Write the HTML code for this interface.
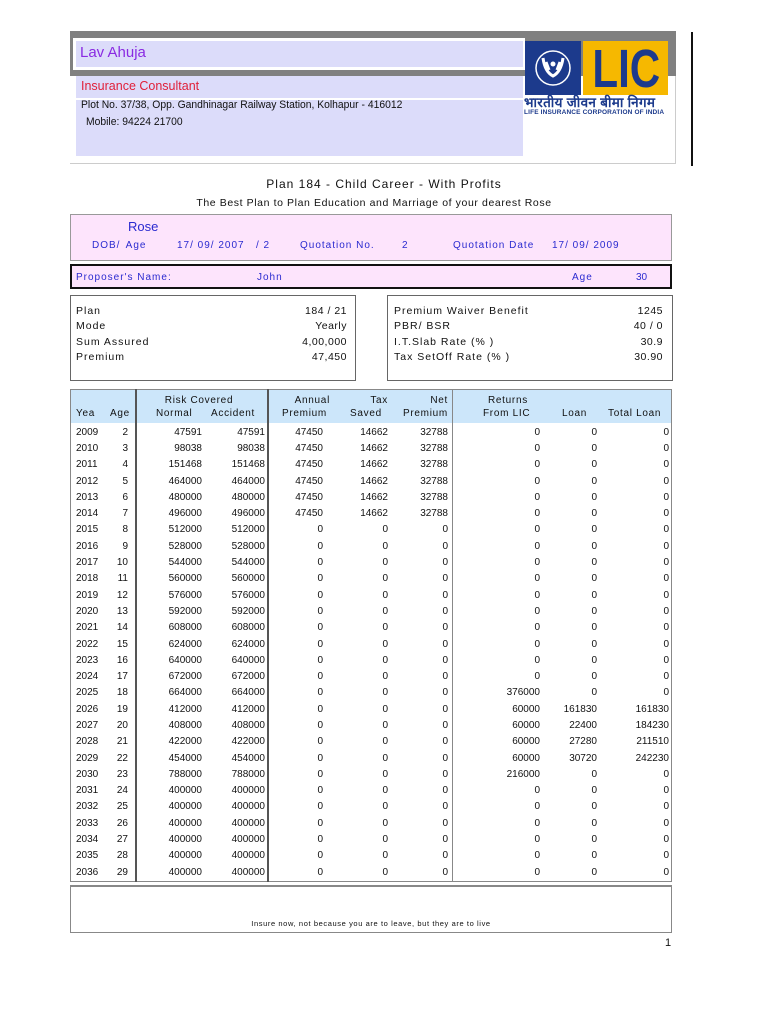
<!DOCTYPE html>
<html><head><meta charset="utf-8"><style>
*{margin:0;padding:0;box-sizing:border-box}
body{width:768px;height:1024px;background:#fff;position:relative;font-family:"Liberation Sans",sans-serif;color:#111;overflow:hidden}
.a{position:absolute}
.sp{letter-spacing:1px}
table{border-collapse:collapse;table-layout:fixed;font-size:10px}
td{height:16.3px;padding:0 3px;white-space:nowrap}
td:first-child{padding-left:6px}
td:nth-child(2){padding-right:9px}
.r{text-align:right}
</style></head><body>
<div class="a" style="left:70px;top:31px;width:606px;height:45px;background:#808080"></div>
<div class="a" style="left:73px;top:38px;width:452px;height:32px;background:#fff"></div>
<div class="a" style="left:76px;top:41px;width:447px;height:26px;background:#dcdcfa"></div>
<div class="a" style="left:80px;top:44px;font-size:15px;color:#8a2be2">Lav Ahuja</div>
<div class="a" style="left:70px;top:76px;width:606px;height:88px;background:#fff;border-right:1px solid #ccc;border-bottom:1px solid #ccc"></div>
<div class="a" style="left:76px;top:76px;width:447px;height:22px;background:#dcdcfa"></div>
<div class="a" style="left:81px;top:79px;font-size:12.5px;color:#e0203a">Insurance Consultant</div>
<div class="a" style="left:76px;top:100px;width:447px;height:56px;background:#dcdcfa"></div>
<div class="a" style="left:81px;top:99px;font-size:11px;transform:scaleX(.94);transform-origin:left">Plot No. 37/38, Opp. Gandhinagar Railway Station, Kolhapur - 416012</div>
<div class="a" style="left:86px;top:116px;font-size:11px;transform:scaleX(.94);transform-origin:left">Mobile: 94224 21700</div>
<div class="a" style="left:525px;top:41px;width:56px;height:54px;background:#1c3a8c"></div>
<svg class="a" style="left:533px;top:48px" width="40" height="40" viewBox="0 0 40 40"><circle cx="20" cy="20" r="17" fill="none" stroke="#fff" stroke-width="1.5"/><path d="M10 10 Q12 24 20 28 Q28 24 30 10 M13 14 L16 22 M27 14 L24 22" stroke="#fff" stroke-width="3" fill="none"/><circle cx="20" cy="16" r="2.5" fill="#fff"/></svg>
<div class="a" style="left:583px;top:41px;width:85px;height:54px;background:#f6b800;overflow:hidden"><div style="color:#1c3a8c;font-size:54px;font-weight:bold;line-height:56px;text-align:center;transform:scaleX(.78);width:85px">LIC</div></div>
<div class="a" style="left:524px;top:96px;width:150px;font-size:13.5px;color:#1c3a8c;font-weight:bold;line-height:13px;letter-spacing:.3px;font-family:'Liberation Sans','DejaVu Sans',sans-serif;white-space:nowrap">भारतीय जीवन बीमा निगम</div>
<div class="a" style="left:524px;top:109px;font-size:6.5px;color:#1c3a8c;font-weight:bold;letter-spacing:.15px;white-space:nowrap">LIFE INSURANCE CORPORATION OF INDIA</div>
<div class="a" style="left:691px;top:32px;width:2px;height:134px;background:#111"></div>

<div class="a sp" style="left:0;width:768px;top:177px;text-align:center;font-size:12px">Plan 184 - Child Career - With Profits</div>
<div class="a" style="left:0;width:748px;top:197px;text-align:center;font-size:10.5px;letter-spacing:.6px">The Best Plan to Plan Education and Marriage of your dearest Rose</div>

<div class="a" style="left:70px;top:214px;width:602px;height:47px;background:#fde4fc;border:1px solid #999"></div>
<div class="a" style="left:128px;top:219px;font-size:13px;color:#2a2ad0">Rose</div>
<div class="a sp" style="left:92px;top:240px;font-size:10px;color:#2a2ad0;word-spacing:2px">DOB/ Age</div>
<div class="a sp" style="left:177px;top:240px;font-size:10px;color:#2a2ad0">17/ 09/ 2007 &nbsp;&nbsp;/ 2</div>
<div class="a sp" style="left:300px;top:240px;font-size:10px;color:#2a2ad0">Quotation No.</div>
<div class="a" style="left:402px;top:240px;font-size:10px;color:#2a2ad0">2</div>
<div class="a sp" style="left:453px;top:240px;font-size:10px;color:#2a2ad0">Quotation Date</div>
<div class="a sp" style="left:552px;top:240px;font-size:10px;color:#2a2ad0">17/ 09/ 2009</div>

<div class="a" style="left:70px;top:264px;width:602px;height:25px;background:#fde4fc;border:2px solid #111"></div>
<div class="a sp" style="left:76px;top:272px;font-size:10px;color:#2a2ad0">Proposer's Name:</div>
<div class="a sp" style="left:257px;top:272px;font-size:10px;color:#2a2ad0">John</div>
<div class="a sp" style="left:572px;top:272px;font-size:10px;color:#2a2ad0">Age</div>
<div class="a" style="left:636px;top:272px;font-size:10px;color:#2a2ad0">30</div>

<div class="a" style="left:70px;top:295px;width:286px;height:86px;border:1px solid #666"></div>
<div class="a sp" style="left:76px;top:304px;font-size:10.5px;line-height:15.3px">Plan<br>Mode<br>Sum Assured<br>Premium</div>
<div class="a" style="left:200px;width:147px;top:304px;font-size:10.5px;line-height:15.3px;text-align:right;letter-spacing:.5px">184 / 21<br>Yearly<br>4,00,000<br>47,450</div>
<div class="a" style="left:387px;top:295px;width:286px;height:86px;border:1px solid #666"></div>
<div class="a sp" style="left:394px;top:304px;font-size:10.5px;line-height:15.3px">Premium Waiver Benefit<br>PBR/ BSR<br>I.T.Slab Rate (% )<br>Tax SetOff Rate (% )</div>
<div class="a" style="left:560px;width:103px;top:304px;font-size:10.5px;line-height:15.3px;text-align:right;letter-spacing:.5px">1245<br>40 / 0<br>30.9<br>30.90</div>

<div class="a" style="left:70px;top:389px;width:602px;height:34px;background:#cce6fa"></div>
<div class="a" style="left:70px;top:389px;width:602px;height:493px;border:1px solid #888"></div>
<div class="a" style="left:135px;top:389px;width:2px;height:493px;background:#555"></div>
<div class="a" style="left:267px;top:389px;width:2px;height:493px;background:#555"></div>
<div class="a" style="left:452px;top:389px;width:1px;height:493px;background:#888"></div>
<div class="a" style="left:70px;top:394px;width:602px;font-size:10px;letter-spacing:.7px;line-height:14px">
<span class="a" style="left:93px;width:72px;text-align:center">Risk Covered</span>
<span class="a" style="left:6px;top:13px">Yea</span><span class="a" style="left:40px;top:13px">Age</span>
<span class="a" style="left:86px;top:13px">Normal</span><span class="a" style="left:141px;top:13px">Accident</span>
<span class="a" style="left:222px;width:38px;text-align:right">Annual</span><span class="a" style="left:212px;top:13px">Premium</span>
<span class="a" style="left:280px;width:38px;text-align:right">Tax</span><span class="a" style="left:280px;top:13px">Saved</span>
<span class="a" style="left:340px;width:38px;text-align:right">Net</span><span class="a" style="left:333px;top:13px">Premium</span>
<span class="a" style="left:418px">Returns</span><span class="a" style="left:413px;top:13px">From LIC</span>
<span class="a" style="left:492px;top:13px">Loan</span><span class="a" style="left:538px;top:13px">Total Loan</span>
</div>
<table class="a" style="left:70px;top:424px;width:602px">
<colgroup><col style="width:37px"><col style="width:30px"><col style="width:68px"><col style="width:63px"><col style="width:58px"><col style="width:65px"><col style="width:60px"><col style="width:92px"><col style="width:57px"><col style="width:72px"></colgroup>
<tbody id="tb"></tbody></table>
<div class="a" style="left:70px;top:885px;width:602px;height:48px;border:1px solid #888;border-top:2px solid #888"></div>
<div class="a" style="left:70px;top:919px;width:602px;text-align:center;font-size:7.5px;letter-spacing:.6px">Insure now, not because you are to leave, but they are to live</div>
<div class="a" style="left:665px;top:937px;font-size:11px">1</div>
<script>
var n=[47591,98038,151468,464000,480000,496000,512000,528000,544000,560000,576000,592000,608000,624000,640000,672000,664000,412000,408000,422000,454000,788000,400000,400000,400000,400000,400000,400000];
var ret={16:[376000,0,0],17:[60000,161830,161830],18:[60000,22400,184230],19:[60000,27280,211510],20:[60000,30720,242230],21:[216000,0,0]};
var h='';for(var i=0;i<28;i++){var p=i<6,r=ret[i]||[0,0,0];
h+='<tr><td>'+(2009+i)+'</td><td class="r">'+(2+i)+'</td><td class="r">'+n[i]+'</td><td class="r">'+n[i]+'</td><td class="r">'+(p?47450:0)+'</td><td class="r">'+(p?14662:0)+'</td><td class="r">'+(p?32788:0)+'</td><td class="r">'+r[0]+'</td><td class="r">'+r[1]+'</td><td class="r">'+r[2]+'</td></tr>';}
document.getElementById('tb').innerHTML=h;
</script>
</body></html>
